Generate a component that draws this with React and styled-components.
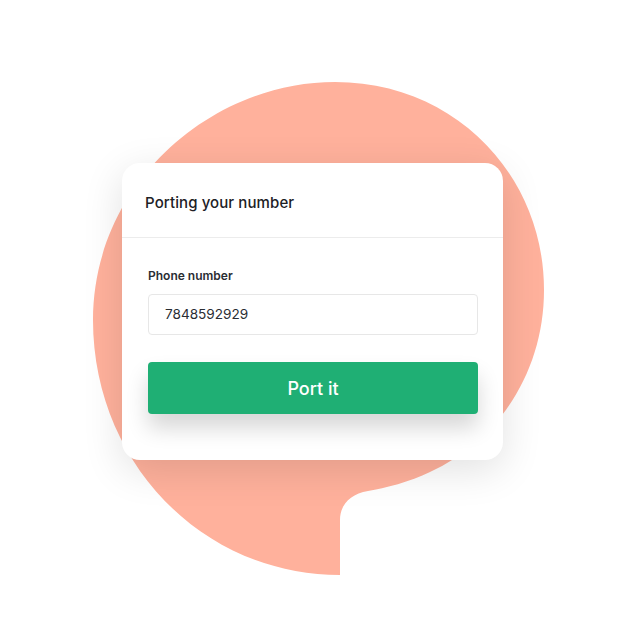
import React from 'react'
import styled, { createGlobalStyle } from 'styled-components'

const GlobalStyle = createGlobalStyle`
  html, body {
    margin: 0;
    padding: 0;
    background: #ffffff;
  }
  body {
    font-family: Inter, "Noto Sans", sans-serif;
    -webkit-font-smoothing: antialiased;
  }
`

function Blob() {
  return (
    <BlobSvg viewBox="0 0 643 637" aria-hidden="true">
      <path
        d="M 335 82
           C 455 82, 544 175, 544 290
           C 544 370, 500 440, 430 472
           C 410 482, 385 488, 368 491
           C 350 494, 340 505, 340 520
           L 340 575
           C 200 575, 93 460, 93 320
           C 93 185, 210 82, 335 82 Z"
        fill="#FFB19C"
      />
    </BlobSvg>
  )
}

export default function App() {
  const [phone, setPhone] = React.useState('7848592929')

  return (
    <>
      <GlobalStyle />
      <Stage>
        <Blob />
        <Card>
          <CardHeader>
            <Title>Porting your number</Title>
          </CardHeader>
          <CardBody>
            <Label htmlFor="phone">Phone number</Label>
            <Input
              id="phone"
              value={phone}
              onChange={(ev) => setPhone(ev.target.value)}
            />
            <PortButton type="button">Port it</PortButton>
          </CardBody>
        </Card>
      </Stage>
    </>
  )
}

const Stage = styled.div`
  position: relative;
  width: 643px;
  height: 637px;
  box-sizing: border-box;
  padding: 163px 0 0 122px;
  overflow: hidden;
`

const BlobSvg = styled.svg`
  position: absolute;
  inset: 0;
  width: 643px;
  height: 637px;
`

const Card = styled.section`
  position: relative;
  width: 381px;
  height: 297px;
  box-sizing: border-box;
  background: #ffffff;
  border-radius: 18px;
  box-shadow: 0 10px 40px rgba(0, 0, 0, 0.12);
  display: flex;
  flex-direction: column;
`

const CardHeader = styled.header`
  height: 75px;
  box-sizing: border-box;
  padding: 5px 23px 0;
  display: flex;
  align-items: center;
  border-bottom: 1px solid #ececec;
`

const Title = styled.h2`
  margin: 0;
  font-size: 15px;
  font-weight: 500;
  color: #1d2125;
  letter-spacing: 0.1px;
`

const CardBody = styled.div`
  padding: 31px 25px 0 26px;
  display: flex;
  flex-direction: column;
`

const Label = styled.label`
  font-size: 12px;
  font-weight: 600;
  color: #2a2d33;
  line-height: 14px;
  margin-bottom: 11px;
`

const Input = styled.input`
  height: 41px;
  box-sizing: border-box;
  border: 1px solid #e7e7e7;
  border-radius: 4px;
  padding: 0 16px 1px;
  font-family: Inter, "Noto Sans", sans-serif;
  font-size: 13.6px;
  color: #2a2d33;
  outline: none;
  margin-bottom: 27px;
`

const PortButton = styled.button`
  height: 52px;
  border: none;
  border-radius: 4px;
  background: #1faf74;
  color: #ffffff;
  font-family: Inter, "Noto Sans", sans-serif;
  font-size: 18px;
  font-weight: 500;
  cursor: pointer;
  box-shadow: 0 14px 22px rgba(0, 0, 0, 0.16);
`
